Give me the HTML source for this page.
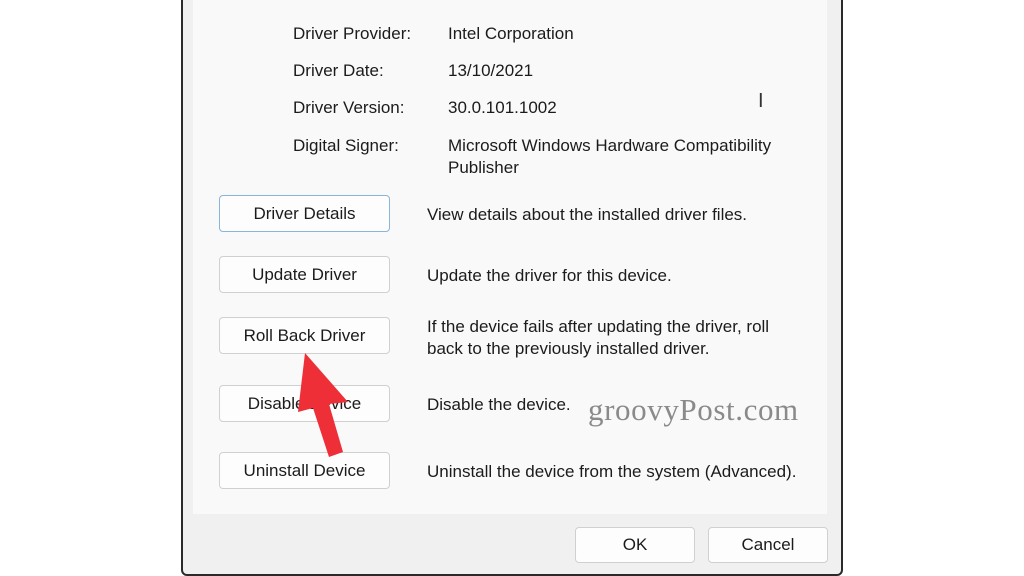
<!DOCTYPE html>
<html><head><style>
body{margin:0;width:1024px;height:576px;background:#fff;position:relative;overflow:hidden;font-family:"Liberation Sans",sans-serif;color:#1b1b1b}
.win{position:absolute;left:181px;top:-2px;width:658px;height:574px;border:2px solid #2a2a2a;background:#f0f0f0;border-radius:0 0 6px 6px}
.panel{position:absolute;left:193px;top:0;width:634px;height:514px;background:#f9f9f9}
.t{position:absolute;font-size:17px;white-space:nowrap;line-height:22px}
.b{position:absolute;left:219px;width:171px;height:37px;border:1px solid #d0d0d0;border-radius:4px;background:#fdfdfd;font-size:17px;text-align:center;line-height:35px;box-sizing:border-box}
.fb{position:absolute;top:527px;width:120px;height:36px;border:1px solid #d0d0d0;border-radius:4px;background:#fdfdfd;font-size:17px;text-align:center;line-height:34px;box-sizing:border-box}
</style></head><body>
<div class="win"></div>
<div class="panel"></div>
<div class="t" style="left:293px;top:23px">Driver Provider:</div>
<div class="t" style="left:448px;top:23px">Intel Corporation</div>
<div class="t" style="left:293px;top:60px">Driver Date:</div>
<div class="t" style="left:448px;top:60px">13/10/2021</div>
<div class="t" style="left:293px;top:97px">Driver Version:</div>
<div class="t" style="left:448px;top:97px">30.0.101.1002</div>
<div class="t" style="left:293px;top:135px">Digital Signer:</div>
<div class="t" style="left:448px;top:135px">Microsoft Windows Hardware Compatibility<br>Publisher</div>
<div class="b" style="top:195px;border-color:#8ab4d8">Driver Details</div>
<div class="t" style="left:427px;top:204px">View details about the installed driver files.</div>
<div class="b" style="top:256px">Update Driver</div>
<div class="t" style="left:427px;top:265px">Update the driver for this device.</div>
<div class="b" style="top:317px">Roll Back Driver</div>
<div class="t" style="left:427px;top:316px">If the device fails after updating the driver, roll<br>back to the previously installed driver.</div>
<div class="b" style="top:385px">Disable Device</div>
<div class="t" style="left:427px;top:394px">Disable the device.</div>
<div class="b" style="top:452px">Uninstall Device</div>
<div class="t" style="left:427px;top:461px">Uninstall the device from the system (Advanced).</div>
<div class="t" style="left:588px;top:394px;font-family:'Liberation Serif',serif;font-size:31px;letter-spacing:0.6px;color:#8a8a8a;line-height:32px">groovyPost.com</div>
<div class="fb" style="left:575px">OK</div>
<div class="fb" style="left:708px">Cancel</div>
<div class="t" style="left:758px;top:90px;font-size:20px;color:#333">I</div>
<svg style="position:absolute;left:0;top:0" width="1024" height="576">
<polygon points="305,353 348,402 329,404 343,452 329,457 313,408 298,412" fill="#ee2f37"/>
</svg>
</body></html>
